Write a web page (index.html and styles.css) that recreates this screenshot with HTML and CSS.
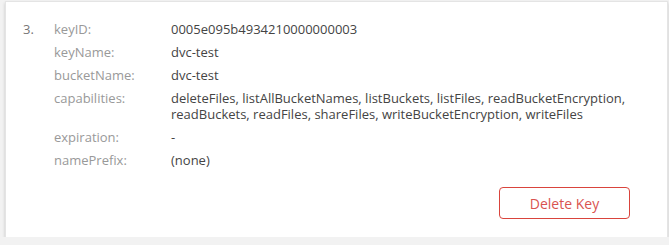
FILE: index.html
```html
<!DOCTYPE html>
<html lang="en">
<head>
    <meta charset="UTF-8">
    <title>Application Keys</title>
    <link rel="stylesheet" href="styles.css">
</head>
<body>
    <div class="key-card">
        <div class="key-info">
            <span class="key-num">3.</span>
            <span class="key-label">keyID:</span>
            <span class="key-value">0005e095b4934210000000003</span>

            <span></span>
            <span class="key-label">keyName:</span>
            <span class="key-value">dvc-test</span>

            <span></span>
            <span class="key-label">bucketName:</span>
            <span class="key-value">dvc-test</span>

            <span></span>
            <span class="key-label">capabilities:</span>
            <span class="key-value">deleteFiles, listAllBucketNames, listBuckets, listFiles, readBucketEncryption, readBuckets, readFiles, shareFiles, writeBucketEncryption, writeFiles</span>

            <span></span>
            <span class="key-label">expiration:</span>
            <span class="key-value">-</span>

            <span></span>
            <span class="key-label">namePrefix:</span>
            <span class="key-value">(none)</span>
        </div>
        <div class="key-actions">
            <button class="btn-delete">Delete Key</button>
        </div>
    </div>
</body>
</html>
```

FILE: styles.css
```css
body {
    margin: 0;
    padding: 1px 1px 0 5px;
    background: #f2f2f2;
    font-family: "Open Sans", Arial, sans-serif;
    font-size: 13px;
}

.key-card {
    background: white;
    border: 1px solid #e4e4e4;
    border-bottom: none;
    box-shadow: 0 2px 3px rgba(0, 0, 0, 0.18);
    padding: 19px 20px 17px 16px;
    height: 199px;
}

.key-info {
    display: grid;
    grid-template-columns: 32px 117px 1fr;
    row-gap: 7px;
    line-height: 16px;
}

.key-num {
    color: #777;
    padding-left: 1px;
}

.key-label {
    color: #999;
}

.key-value {
    color: #444;
}

.key-actions {
    display: flex;
    justify-content: flex-end;
    margin-top: 19px;
    padding-right: 17px;
}

.btn-delete {
    width: 131px;
    height: 32px;
    background: white;
    border: 1px solid #d9443d;
    border-radius: 4px;
    color: #d9534f;
    font-family: "Open Sans", Arial, sans-serif;
    font-size: 14px;
    cursor: pointer;
}
```
